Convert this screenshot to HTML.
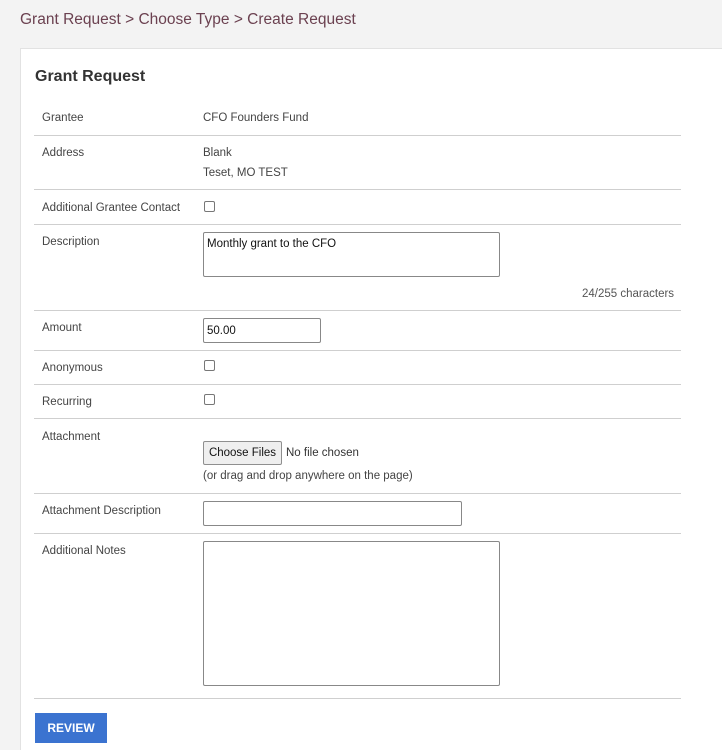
<!DOCTYPE html>
<html><head><style>
*{box-sizing:border-box}
html,body{margin:0;width:722px;height:750px;overflow:hidden}
body{background:#f3f3f3;font-family:"Liberation Sans",sans-serif;font-size:11.5px;color:#444;position:relative}
.a{position:absolute;white-space:nowrap}
.card{position:absolute;left:20px;top:48px;width:710px;height:702px;background:#fff;border:1px solid #e2e2e2;border-bottom:0}
.hr{position:absolute;left:34px;width:647px;height:1px;background:#cfcfcf}
.lab{position:absolute;left:42px;color:#444}
.val{position:absolute;left:203px;color:#444}
.cb{position:absolute;left:204px;width:11px;height:11px;border:1px solid #777;border-radius:2px;background:#fff}
.box{position:absolute;border:1px solid #888;border-radius:2px;background:#fff;color:#111;padding:5px 3px}
</style></head><body>
<div class="a" style="left:20px;top:11px;font-size:15.5px;color:#6b4150">Grant Request &gt; Choose Type &gt; Create Request</div>
<div class="card"></div>
<div class="a" style="left:35px;top:68px;font-size:16px;font-weight:bold;color:#333">Grant Request</div>
<div class="lab" style="top:112px">Grantee</div><div class="val" style="top:112px">CFO Founders Fund</div>
<div class="hr" style="top:135px"></div>
<div class="lab" style="top:147px">Address</div><div class="val" style="top:147px">Blank</div><div class="val" style="top:167px">Teset, MO TEST</div>
<div class="hr" style="top:189px"></div>
<div class="lab" style="top:202px">Additional Grantee Contact</div><div class="cb" style="top:201px"></div>
<div class="hr" style="top:224px"></div>
<div class="lab" style="top:236px">Description</div>
<div class="box" style="left:203px;top:232px;width:297px;height:45px">Monthly grant to the CFO</div>
<div class="a" style="left:582px;top:288px;color:#555">24/255 characters</div>
<div class="hr" style="top:310px"></div>
<div class="lab" style="top:322px">Amount</div>
<div class="box" style="left:203px;top:318px;width:118px;height:25px;padding-top:6px">50.00</div>
<div class="hr" style="top:350px"></div>
<div class="lab" style="top:362px">Anonymous</div><div class="cb" style="top:360px"></div>
<div class="hr" style="top:384px"></div>
<div class="lab" style="top:396px">Recurring</div><div class="cb" style="top:394px"></div>
<div class="hr" style="top:418px"></div>
<div class="lab" style="top:431px">Attachment</div>
<div class="a" style="left:203px;top:441px;width:79px;height:24px;background:#efefef;border:1px solid #8f8f8f;border-radius:2px;color:#111;text-align:center;line-height:23px">Choose Files</div>
<div class="a" style="left:286px;top:447px;color:#333">No file chosen</div>
<div class="val" style="top:470px">(or drag and drop anywhere on the page)</div>
<div class="hr" style="top:493px"></div>
<div class="lab" style="top:505px">Attachment Description</div>
<div class="box" style="left:203px;top:501px;width:259px;height:25px"></div>
<div class="hr" style="top:533px"></div>
<div class="lab" style="top:545px">Additional Notes</div>
<div class="box" style="left:203px;top:541px;width:297px;height:145px"></div>
<div class="hr" style="top:698px"></div>
<div class="a" style="left:35px;top:713px;width:72px;height:30px;background:#3b73d0;color:#fff;font-weight:bold;font-size:12px;text-align:center;line-height:30px">REVIEW</div>
</body></html>
